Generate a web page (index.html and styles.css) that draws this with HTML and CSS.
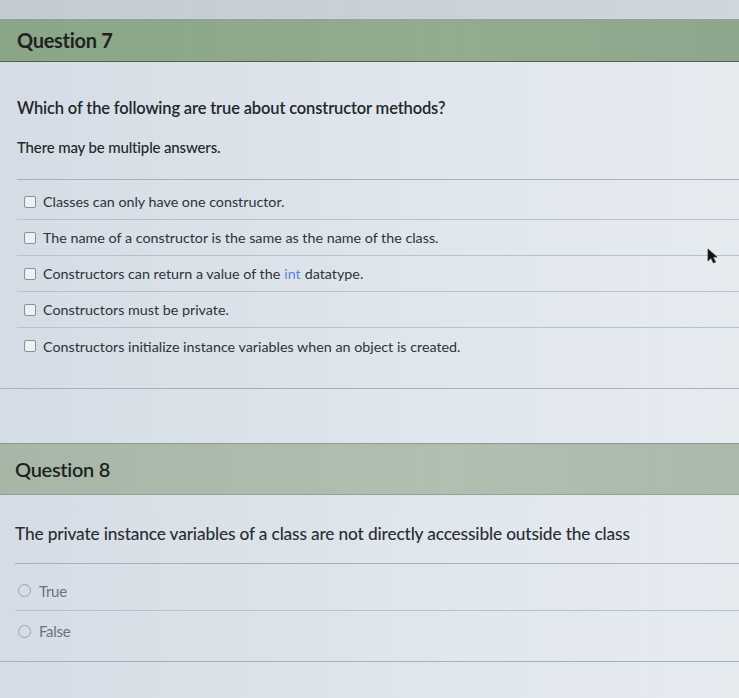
FILE: index.html
```html
<!DOCTYPE html>
<html>
<head>
<meta charset="utf-8">
<link rel="stylesheet" href="styles.css">
</head>
<body>
<div class="page">
  <div class="top-strip"></div>
  <header class="qhead q7">Question 7</header>
  <section class="qbody q7body">
    <p class="prompt first">Which of the following are true about constructor methods?</p>
    <p class="prompt second">There may be multiple answers.</p>
    <div class="rule inset"></div>
    <ul class="options">
      <li><span class="box"></span>Classes can only have one constructor.</li>
      <li><span class="box"></span>The name of a constructor is the same as the name of the class.</li>
      <li><span class="box"></span>Constructors can return a value of the <span class="code">int</span> datatype.</li>
      <li><span class="box"></span>Constructors must be private.</li>
      <li><span class="box"></span>Constructors initialize instance variables when an object is created.</li>
    </ul>
  </section>
  <div class="rule full"></div>
  <div class="gap"></div>
  <header class="qhead q8">Question 8</header>
  <section class="qbody q8body">
    <p class="prompt big">The private instance variables of a class are not directly accessible outside the class</p>
    <div class="rule inset"></div>
    <ul class="options radios">
      <li><span class="radio"></span>True</li>
      <li><span class="radio"></span>False</li>
    </ul>
  </section>
  <div class="rule full"></div>
  <svg class="cursor" width="12" height="16" viewBox="0 0 12 16"><path d="M1 1 L1 13 L4 10 L6.5 15 L8.5 14 L6 9 L10 9 Z" fill="#111" stroke="#333" stroke-width="0.8"/></svg>
</div>
</body>
</html>
```

FILE: styles.css
```css
html, body {
  margin: 0;
  padding: 0;
}
body {
  width: 739px;
  height: 698px;
  overflow: hidden;
  background: linear-gradient(to right, #d4dce5 0%, #dfe6ed 55%, #e6ebf0 100%);
  font-family: Lato, "Open Sans", "Liberation Sans", sans-serif;
  color: #232629;
}
.page {
  position: relative;
  width: 739px;
  height: 698px;
}
.top-strip {
  height: 19px;
  background: linear-gradient(to right, #c3cbd3, #cfd6dd);
}
.qhead {
  display: flex;
  align-items: center;
  padding-left: 17px;
  font-size: 20px;
  font-weight: 700;
  color: #1e2320;
  letter-spacing: -0.3px;
}
.q7 {
  height: 43px;
  background: linear-gradient(to right, #8aa588, #93ab8f 60%, #8ea78c);
  border-bottom: 1px solid #53624f;
  box-sizing: border-box;
}
.q8 {
  height: 52px;
  padding-left: 15px;
  background: linear-gradient(to right, #a6b7a7, #b0bfb0 60%, #aab9aa);
  border-top: 1px solid #8d9a8e;
  border-bottom: 1px solid #95a196;
  box-sizing: border-box;
  font-weight: 600;
}
.qbody {
  padding: 0 0 0 17px;
}
.prompt {
  margin: 0;
  font-size: 16.5px;
  line-height: 20px;
  font-weight: 600;
  color: #24272a;
  letter-spacing: -0.15px;
}
.prompt.first {
  padding-top: 36px;
}
.prompt.second {
  padding-top: 19px;
  font-weight: 500;
  font-size: 15px;
}
.q8body {
  padding-left: 15px;
  padding-bottom: 10px;
}
.prompt.big {
  padding-top: 29px;
  font-size: 17.3px;
  font-weight: 500;
  color: #2a2e33;
}
.rule {
  height: 1px;
  background: #a8b1ba;
}
.rule.inset {
  margin-top: 22px;
}
.q8body .rule.inset {
  margin-top: 19px;
}
.options {
  list-style: none;
  margin: 4px 0 0 0;
  padding: 0;
}
.options li {
  display: flex;
  align-items: center;
  height: 36px;
  border-bottom: 1px solid #b9c2cb;
  box-sizing: border-box;
  font-size: 14.3px;
  color: #2f3337;
}
.options li:last-child {
  border-bottom: none;
}
.q7body {
  padding-bottom: 24px;
}
.box {
  width: 10px;
  height: 10px;
  border: 1px solid #8a9096;
  border-radius: 2px;
  background: #eef1f4;
  margin: 0 7px 0 7px;
  flex: none;
}
.code {
  color: #5a86d6;
  margin: 0 4px;
}
.gap {
  height: 54px;
}
.radios {
  margin-top: 7px;
}
.radios li {
  height: 40px;
  color: #6c7278;
  font-size: 15px;
  letter-spacing: -0.3px;
}
.radio {
  width: 11px;
  height: 11px;
  border: 1.5px solid #9aa1a8;
  border-radius: 50%;
  margin: 0 8px 0 3px;
  flex: none;
}
.cursor {
  position: absolute;
  left: 707px;
  top: 248px;
}
```
